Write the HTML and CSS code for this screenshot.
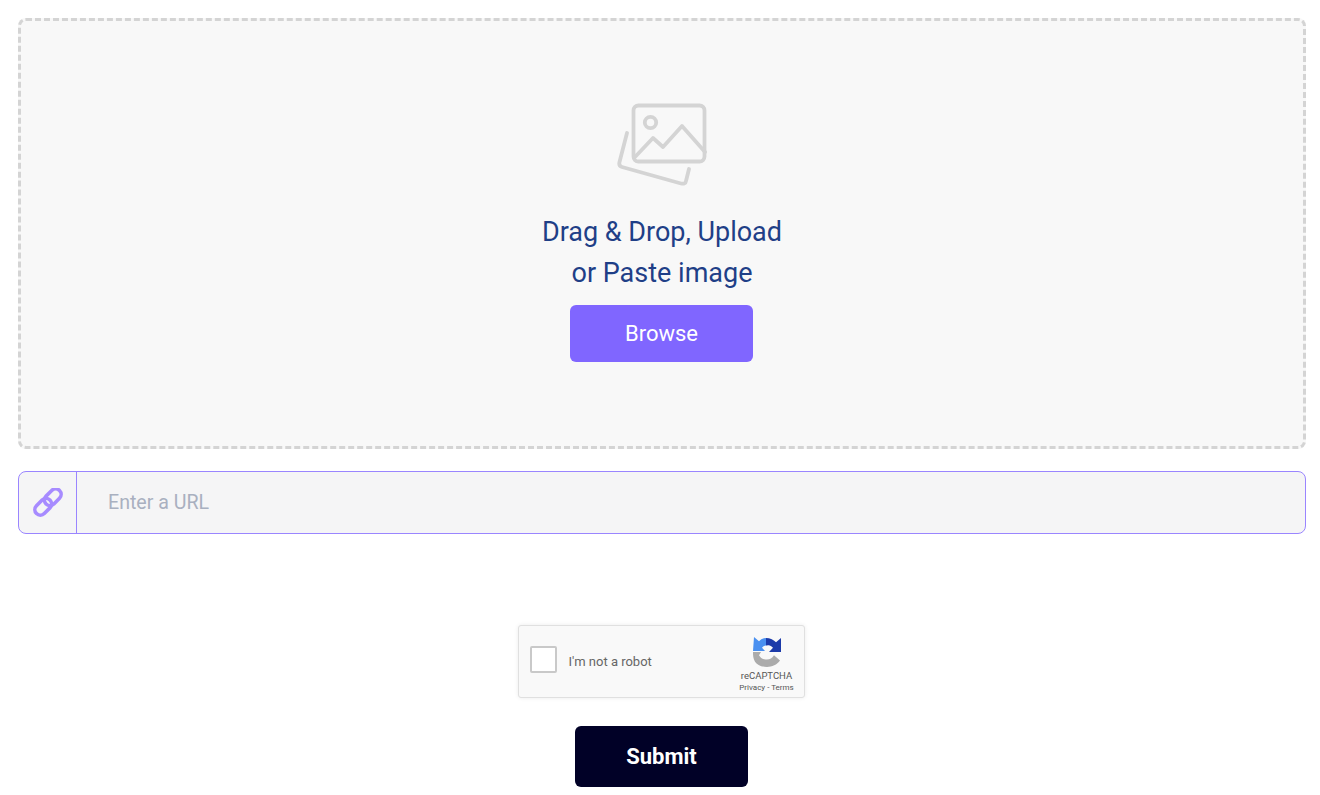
FILE: index.html
```html
<!DOCTYPE html>
<html lang="en">
<head>
    <meta charset="UTF-8">
    <meta name="viewport" content="width=device-width, initial-scale=1.0">
    <title>Image Upload</title>
    <link rel="stylesheet" href="styles.css">
</head>
<body>
    <form class="upload-form">
        <div class="dropzone">
            <svg class="dropzone-icon" width="90" height="84" viewBox="0 0 90 84" fill="none" stroke="#d4d4d4" stroke-width="3.8" stroke-linecap="round" stroke-linejoin="round">
                <rect x="16.5" y="2.5" width="71" height="56" rx="5"/>
                <circle cx="33.5" cy="19.5" r="5.7"/>
                <path d="M18 54 L36 35 L46 44 L65 23 L88 49"/>
                <path d="M10 30 L2.5 59 Q1.5 63 5 64 L64 80.5 Q68.5 81.5 69 78 L72 66"/>
            </svg>
            <p class="dropzone-text">Drag &amp; Drop, Upload<br>or Paste image</p>
            <button type="button" class="browse-btn">Browse</button>
        </div>

        <div class="url-field">
            <span class="url-icon">
                <svg width="30" height="30" viewBox="0 0 30 30" fill="none" stroke="#a78bff" stroke-width="3.6">
                    <rect x="0.7" y="13.3" width="19" height="11" rx="5.5" transform="rotate(-45 10.2 18.8)"/>
                    <rect x="10.3" y="3.7" width="19" height="11" rx="5.5" transform="rotate(-45 19.8 9.2)"/>
                </svg>
            </span>
            <input class="url-input" type="text" placeholder="Enter a URL">
        </div>

        <div class="captcha">
            <span class="captcha-box"></span>
            <span class="captcha-label">I'm not a robot</span>
            <div class="captcha-brand">
                <svg width="30" height="30" viewBox="0 0 30 28" preserveAspectRatio="none">
                    <path fill="#4a90f0" d="M2 0 L7 4 C9 2 11 1 14 1 L14 8 C12 8 11 9 10 10 L13 13 L1 13 Z"/>
                    <path fill="#1c3aa9" d="M14 1 C18 1 22 3 24 5 L29 1 L29 14 L17 14 L21 10 C19 8 17 7 15 8 L14 8 Z"/>
                    <path fill="#ababab" d="M1 14 L9 14 L7 17 C9 20 11 21 15 21 C18 21 20 20 22 17 L28 22 C25 26 20 28 15 28 C10 28 5 26 3 23 C1 20 1 17 1 14 Z"/>
                </svg>
                <span class="captcha-name">reCAPTCHA</span>
                <span class="captcha-links">Privacy - Terms</span>
            </div>
        </div>

        <button type="submit" class="submit-btn">Submit</button>
    </form>
</body>
</html>
```

FILE: styles.css
```css
* {
    margin: 0;
    padding: 0;
    box-sizing: border-box;
}

body {
    font-family: Roboto, sans-serif;
    background: #fff;
    padding: 18px 14px 0 18px;
}

.upload-form {
    display: flex;
    flex-direction: column;
    align-items: center;
}

.dropzone {
    width: 100%;
    height: 431px;
    background: #f8f8f8;
    border: 3px dashed #d4d4d4;
    border-radius: 8px;
    display: flex;
    flex-direction: column;
    align-items: center;
    padding-top: 82px;
}

.dropzone-icon {
    margin-right: 1px;
    margin-bottom: 25px;
}

.dropzone-text {
    font-size: 27px;
    line-height: 41px;
    color: #1f3f87;
    text-align: center;
    margin-bottom: 11px;
}

.browse-btn {
    width: 183px;
    height: 57px;
    margin-right: 1px;
    background: #8066ff;
    color: #fff;
    border: none;
    border-radius: 6px;
    font-family: inherit;
    font-size: 22px;
}

.url-field {
    width: 100%;
    height: 63px;
    margin-top: 22px;
    display: flex;
    background: #f5f5f6;
    border: 1px solid #9a85ff;
    border-radius: 8px;
}

.url-icon {
    width: 58px;
    flex: none;
    display: flex;
    align-items: center;
    justify-content: center;
    border-right: 1px solid #9a85ff;
}

.url-input {
    flex: 1;
    padding-left: 31px;
    padding-bottom: 1px;
    border: none;
    background: transparent;
    font-family: inherit;
    font-size: 19.6px;
}

.url-input::placeholder {
    color: #a9b0c0;
    opacity: 1;
}

.captcha {
    width: 287px;
    height: 73px;
    margin-top: 91px;
    margin-right: 2px;
    display: flex;
    align-items: center;
    padding-left: 11px;
    background: #f9f9f9;
    border: 1px solid #e0e0e0;
    border-radius: 3px;
    box-shadow: 0 0 4px rgba(0, 0, 0, 0.08);
}

.captcha-box {
    width: 27px;
    height: 27px;
    background: #fff;
    border: 2px solid #c9c9c9;
    border-radius: 2px;
    margin-right: 12px;
    margin-top: -4px;
}

.captcha-label {
    font-size: 13px;
    color: #666;
}

.captcha-brand {
    margin-left: auto;
    width: 68px;
    margin-right: 3px;
    padding-top: 7px;
    display: flex;
    flex-direction: column;
    align-items: center;
    color: #555;
}

.captcha-name {
    font-size: 9.5px;
    line-height: 12px;
    margin-top: 3px;
}

.captcha-links {
    font-size: 8px;
    line-height: 12px;
}

.submit-btn {
    width: 173px;
    height: 61px;
    margin-top: 28px;
    margin-right: 1px;
    background: #010127;
    color: #fff;
    border: none;
    border-radius: 6px;
    font-family: inherit;
    font-size: 22px;
    font-weight: 700;
}
```
